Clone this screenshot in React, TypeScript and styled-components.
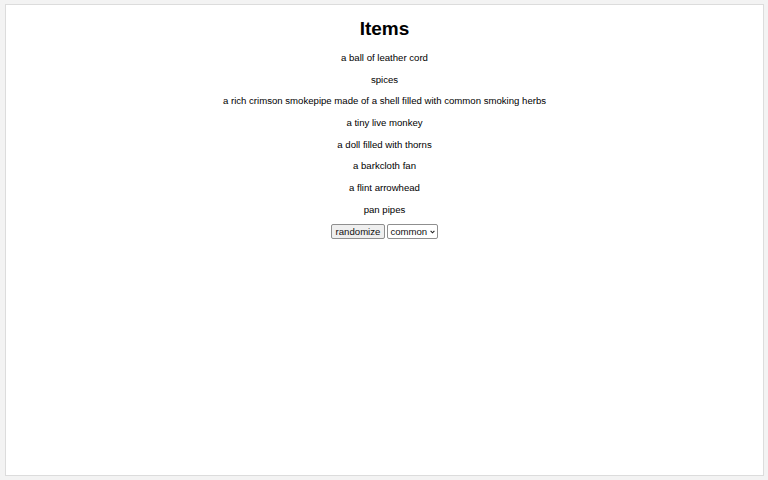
import React, { useState } from "react";
import styled, { createGlobalStyle } from "styled-components";

const Global = createGlobalStyle`
  html, body { margin: 0; padding: 0; background: #f3f3f3; }
  body { font-family: "Liberation Sans", Arial, sans-serif; color: #000; }
`;

const Page = styled.div`
  padding: 4px 4px 4px 5px;
  box-sizing: border-box;
  height: 480px;
  display: flex;
`;

const Panel = styled.main`
  flex: 1;
  background: #fff;
  border: 1px solid #dcdcdc;
  display: flex;
  flex-direction: column;
  align-items: center;
  padding-top: 13px;
`;

const Title = styled.h1`
  margin: 0 0 12px;
  font-size: 19px;
  line-height: 22px;
  font-weight: bold;
`;

const List = styled.div`
  display: flex;
  flex-direction: column;
  align-items: center;
  gap: 10.7px;
`;

const Item = styled.div`
  font-size: 9.6px;
  line-height: 11px;
`;

const Controls = styled.div`
  display: flex;
  gap: 2px;
  margin-top: 9px;
  align-items: center;
`;

const Button = styled.button`
  font-family: "Liberation Sans", Arial, sans-serif;
  font-size: 9.6px;
  padding: 0 4px;
  height: 15px;
  line-height: 11px;
  background: #efefef;
  border: 1px solid #8f8f8f;
  border-radius: 2px;
  color: #111;
`;

const SelectWrap = styled.div`
  position: relative;
  display: flex;
`;

const Select = styled.select`
  appearance: none;
  font-family: "Liberation Sans", Arial, sans-serif;
  font-size: 9.6px;
  height: 15px;
  width: 51px;
  padding: 0 0 0 2px;
  border: 1px solid #8f8f8f;
  border-radius: 2px;
  background: #fff;
  color: #111;
`;

const Chevron = styled.svg`
  position: absolute;
  right: 3px;
  top: 6px;
  pointer-events: none;
`;

const items = [
  "a ball of leather cord",
  "spices",
  "a rich crimson smokepipe made of a shell filled with common smoking herbs",
  "a tiny live monkey",
  "a doll filled with thorns",
  "a barkcloth fan",
  "a flint arrowhead",
  "pan pipes",
];

export default function App() {
  const [rarity, setRarity] = useState("common");
  return (
    <>
      <Global />
      <Page>
        <Panel>
          <Title>Items</Title>
          <List>
            {items.map((t) => (
              <Item key={t}>{t}</Item>
            ))}
          </List>
          <Controls>
            <Button>randomize</Button>
            <SelectWrap>
              <Select value={rarity} onChange={(e) => setRarity(e.target.value)}>
                <option value="common">common</option>
                <option value="uncommon">uncommon</option>
                <option value="rare">rare</option>
              </Select>
              <Chevron width="5" height="4" viewBox="0 0 5 4">
                <path d="M0.6 0.8 L2.5 2.8 L4.4 0.8" fill="none" stroke="#222" strokeWidth="1.1" />
              </Chevron>
            </SelectWrap>
          </Controls>
        </Panel>
      </Page>
    </>
  );
}
